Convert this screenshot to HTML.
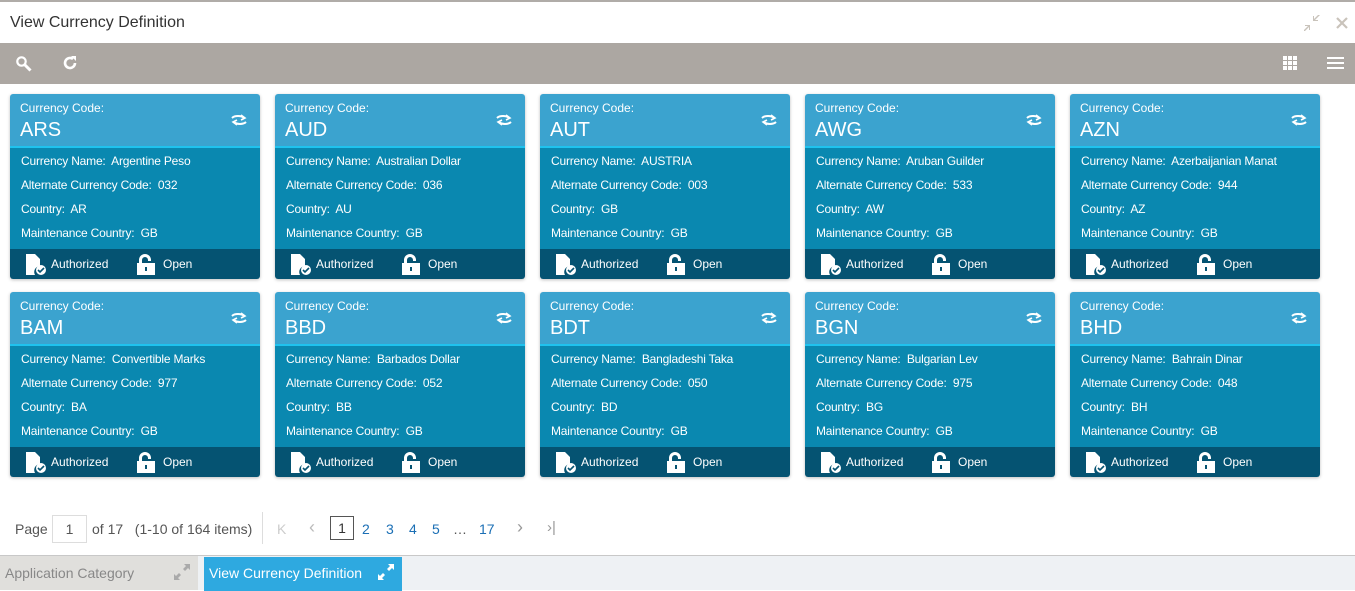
<!DOCTYPE html>
<html><head><meta charset="utf-8"><style>
*{box-sizing:border-box;margin:0;padding:0}
body{width:1355px;height:590px;overflow:hidden;background:#fff;font-family:"Liberation Sans",sans-serif;position:relative}
.top{position:absolute;left:0;top:0;width:1355px;height:43px;border-top:2px solid #b0aca8;}
.top .t{position:absolute;left:10px;top:12px;font-size:16px;color:#333}
.tb{position:absolute;left:0;top:43px;width:1355px;height:41px;background:#aca7a2}
.card{position:absolute;width:250px;height:185px;border-radius:3px;overflow:hidden;box-shadow:0 1px 3px rgba(0,0,0,.25)}
.h{height:54px;background:#3ba3cf;border-bottom:2px solid #1fc2ee;position:relative;color:#fff}
.h .l{position:absolute;left:10px;top:7px;font-size:12px}
.h .c{position:absolute;left:10px;top:25px;font-size:20px}
.h svg{position:absolute;right:10px;top:20px}
.b{height:101px;background:#0a88b0;color:#fff;font-size:12px;padding:5px 0 0 11px;letter-spacing:-0.2px}
.b div{height:24px;line-height:16px}
.f{height:30px;background:#055372;color:#fff;font-size:12px;position:relative}
.f span{position:absolute;top:8px}
.pg{position:absolute;top:514px;font-size:14px;color:#555}
.bb{position:absolute;left:0;top:555px;width:1355px;height:35px;background:#eef1f4;border-top:1px solid #c8c8c8}
</style></head><body>
<div class="top"><div class="t">View Currency Definition</div>
<svg style="position:absolute;left:1303px;top:12px" width="18" height="18" viewBox="0 0 18 18" fill="#c9c3bb"><path d="M17 1l-2-0-4 4v-3h-1v5h5v-1h-3l4-4z M1 17l0-1 4-4h-3v-1h5v5h-1v-3l-4 4z"/></svg>
<svg style="position:absolute;left:1336px;top:15px" width="12" height="12" viewBox="0 0 12 12" stroke="#c9c3bb" stroke-width="2.2"><path d="M1 1l10 10M11 1L1 11"/></svg>
</div>
<div class="tb">
<svg style="position:absolute;left:15px;top:12px" width="18" height="18" viewBox="0 0 18 18"><circle cx="6.5" cy="6.5" r="4.2" fill="none" stroke="#fff" stroke-width="2.2"/><path d="M9.5 9.5l6 6" stroke="#fff" stroke-width="3"/></svg>
<svg style="position:absolute;left:62px;top:12px" width="16" height="16" viewBox="0 0 16 16"><path d="M13 8a5 5 0 1 1-2-4" fill="none" stroke="#fff" stroke-width="2.6"/><path d="M9 1h5v5z" fill="#fff"/></svg>
<svg style="position:absolute;left:1283px;top:13px" width="14" height="14" viewBox="0 0 14 14" fill="#fff"><rect x="0" y="0" width="4" height="4"/><rect x="5" y="0" width="4" height="4"/><rect x="10" y="0" width="4" height="4"/><rect x="0" y="5" width="4" height="4"/><rect x="5" y="5" width="4" height="4"/><rect x="10" y="5" width="4" height="4"/><rect x="0" y="10" width="4" height="4"/><rect x="5" y="10" width="4" height="4"/><rect x="10" y="10" width="4" height="4"/></svg>
<svg style="position:absolute;left:1327px;top:14px" width="17" height="12" viewBox="0 0 17 12" fill="#fff"><rect y="0" width="17" height="2"/><rect y="5" width="17" height="2"/><rect y="10" width="17" height="2"/></svg>
</div>
<div id="cards"></div>
<div class="pg" style="left:15px;top:521px">Page</div>
<div style="position:absolute;left:52px;top:515px;width:35px;height:28px;border:1px solid #ddd;font-size:14px;color:#555;text-align:center;line-height:26px">1</div>
<div class="pg" style="left:92px;top:521px">of 17 &nbsp; (1-10 of 164 items)</div>
<div style="position:absolute;left:262px;top:512px;width:1px;height:32px;background:#ddd"></div>
<div class="pg" style="left:277px;top:521px;color:#ccc">K</div>
<div class="pg" style="left:309px;top:517px;color:#bbb;font-size:18px">‹</div>
<div style="position:absolute;left:330px;top:516px;width:24px;height:24px;border:1px solid #555;font-size:14px;color:#333;text-align:center;line-height:22px">1</div>
<div class="pg" style="left:362px;top:521px;color:#1b6fb5">2</div>
<div class="pg" style="left:386px;top:521px;color:#1b6fb5">3</div>
<div class="pg" style="left:409px;top:521px;color:#1b6fb5">4</div>
<div class="pg" style="left:432px;top:521px;color:#1b6fb5">5</div>
<div class="pg" style="left:453px;top:521px;color:#555">…</div>
<div class="pg" style="left:479px;top:521px;color:#1b6fb5">17</div>
<div class="pg" style="left:517px;top:517px;color:#999;font-size:18px">›</div>
<div class="pg" style="left:547px;top:519px;color:#999;font-size:15px">›|</div>
<div class="bb">
<div style="position:absolute;left:0;top:0;width:198px;height:34px;background:#e0dfdc;color:#888;font-size:14px;padding:9px 0 0 5px">Application Category
<svg style="position:absolute;left:174px;top:8px" width="16" height="16" viewBox="0 0 16 16" fill="#aaa"><path d="M16 0v6l-2-2-3 3-2-2 3-3-2-2z M0 16v-6l2 2 3-3 2 2-3 3 2 2z"/></svg></div>
<div style="position:absolute;left:204px;top:1px;width:198px;height:34px;background:#2ea9e0;color:#fff;font-size:14px;padding:8px 0 0 5px">View Currency Definition
<svg style="position:absolute;left:174px;top:7px" width="16" height="16" viewBox="0 0 16 16" fill="#fff"><path d="M16 0v6l-2-2-3 3-2-2 3-3-2-2z M0 16v-6l2 2 3-3 2 2-3 3 2 2z"/></svg></div>
</div>
<script>
var d=[["ARS","Argentine Peso","032","AR"],["AUD","Australian Dollar","036","AU"],["AUT","AUSTRIA","003","GB"],["AWG","Aruban Guilder","533","AW"],["AZN","Azerbaijanian Manat","944","AZ"],["BAM","Convertible Marks","977","BA"],["BBD","Barbados Dollar","052","BB"],["BDT","Bangladeshi Taka","050","BD"],["BGN","Bulgarian Lev","975","BG"],["BHD","Bahrain Dinar","048","BH"]];
var h="";d.forEach(function(r,i){var x=10+(i%5)*265,y=94+Math.floor(i/5)*198;
h+='<div class="card" style="left:'+x+'px;top:'+y+'px"><div class="h"><div class="l">Currency Code:</div><div class="c">'+r[0]+'</div><svg width="22" height="12" viewBox="0 0 22 12" fill="none" stroke="#fff" stroke-width="2"><path d="M4 4a7 4 0 0 1 12 0"/><path d="M18 8a7 4 0 0 1-12 0"/><path d="M13 1l4 3-4 2" stroke-width="1.6"/><path d="M9 6l-4 2 4 3" stroke-width="1.6"/></svg></div><div class="b"><div>Currency Name:&nbsp; '+r[1]+'</div><div>Alternate Currency Code:&nbsp; '+r[2]+'</div><div>Country:&nbsp; '+r[3]+'</div><div>Maintenance Country:&nbsp; GB</div></div><div class="f"><svg style="position:absolute;left:15px;top:5px" width="22" height="22" viewBox="0 0 22 22"><path d="M1 0h9l5 5v7a6 6 0 0 0-5 9H1z" fill="#fff"/><circle cx="16" cy="16" r="5" fill="#fff"/><path d="M13 16l2 2 4-4" stroke="#055372" stroke-width="1.6" fill="none"/></svg><span style="left:41px">Authorized</span><svg style="position:absolute;left:126px;top:5px" width="20" height="21" viewBox="0 0 20 21"><path d="M3 9V6a6 6 0 0 1 12 0v1h-3V6a3 3 0 0 0-6 0v3" fill="#fff"/><rect x="1" y="9" width="18" height="12" fill="#fff"/><rect x="9" y="13" width="2" height="4" fill="#055372"/></svg><span style="left:153px">Open</span></div></div>';});
document.getElementById("cards").innerHTML=h;
</script>
</body></html>
